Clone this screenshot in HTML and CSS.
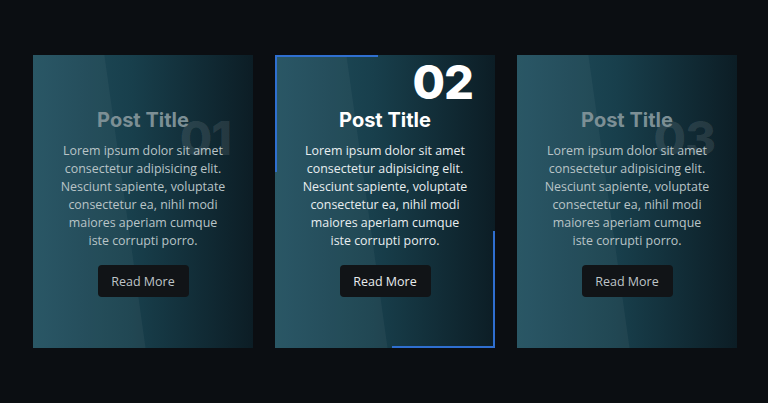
FILE: index.html
```html
<!DOCTYPE html>
<html>
<head>
<meta charset="utf-8">
<link rel="stylesheet" href="styles.css">
</head>
<body>
<main class="cards">
  <article class="card dim">
    <span class="num">01</span>
    <h2 class="title">Post Title</h2>
    <p class="text">Lorem ipsum dolor sit amet consectetur adipisicing elit. Nesciunt sapiente, voluptate consectetur ea, nihil modi maiores aperiam cumque iste corrupti porro.</p>
    <a class="btn">Read More</a>
  </article>
  <article class="card active">
    <span class="num">02</span>
    <h2 class="title">Post Title</h2>
    <p class="text">Lorem ipsum dolor sit amet consectetur adipisicing elit. Nesciunt sapiente, voluptate consectetur ea, nihil modi maiores aperiam cumque iste corrupti porro.</p>
    <a class="btn">Read More</a>
  </article>
  <article class="card dim">
    <span class="num">03</span>
    <h2 class="title">Post Title</h2>
    <p class="text">Lorem ipsum dolor sit amet consectetur adipisicing elit. Nesciunt sapiente, voluptate consectetur ea, nihil modi maiores aperiam cumque iste corrupti porro.</p>
    <a class="btn">Read More</a>
  </article>
</main>
</body>
</html>
```

FILE: styles.css
```css
* { box-sizing: border-box; }
html, body {
  margin: 0;
  height: 100%;
}
body {
  background: #0b0e12;
  font-family: "Open Sans", "DejaVu Sans", sans-serif;
  display: flex;
  align-items: center;
  justify-content: center;
}
.cards {
  display: flex;
  gap: 22px;
  margin-left: 2px;
}
.card {
  position: relative;
  width: 220px;
  height: 293px;
  padding: 52px 10px 0;
  display: flex;
  flex-direction: column;
  align-items: center;
  background: linear-gradient(90deg, #21505f 0%, #183f4c 45%, #0c1d25 100%);
  overflow: hidden;
}
.card::before {
  content: "";
  position: absolute;
  top: -10px;
  bottom: -10px;
  left: -80px;
  width: 150px;
  background: rgba(255, 255, 255, 0.045);
  transform: skewX(8deg);
  transform-origin: top left;
}
.card > * { position: relative; }
.num {
  position: absolute;
  right: 22px;
  top: 57px;
  font-family: "Inter", "DejaVu Sans", sans-serif;
  font-size: 47px;
  font-weight: 800;
  line-height: 52px;
  letter-spacing: -1px;
  color: rgba(255, 255, 255, 0.1);
}
.active .num {
  top: 1px;
  color: #ffffff;
}
.title {
  margin: 0;
  font-family: "Inter", "DejaVu Sans", sans-serif;
  font-size: 20px;
  font-weight: 700;
  line-height: 26px;
  color: #7c8f95;
}
.active .title { color: #ffffff; }
.text {
  margin: 9px 0 0;
  width: 172px;
  font-size: 12.4px;
  line-height: 18px;
  text-align: center;
  color: #b9c4c7;
}
.active .text { color: #e9eef0; }
.btn {
  margin-top: 15px;
  width: 91px;
  height: 32px;
  display: flex;
  align-items: center;
  justify-content: center;
  background: #111417;
  border-radius: 4px;
  font-size: 12.5px;
  color: #bfc5c8;
}
.active .btn { color: #e8ecee; }
.active::after {
  content: "";
  position: absolute;
  inset: 0;
  pointer-events: none;
  background:
    linear-gradient(#2f6fd0, #2f6fd0) top left / 47% 2px no-repeat,
    linear-gradient(#2f6fd0, #2f6fd0) top left / 2px 40% no-repeat,
    linear-gradient(#2f6fd0, #2f6fd0) bottom right / 47% 2px no-repeat,
    linear-gradient(#2f6fd0, #2f6fd0) bottom right / 2px 40% no-repeat;
}
```
